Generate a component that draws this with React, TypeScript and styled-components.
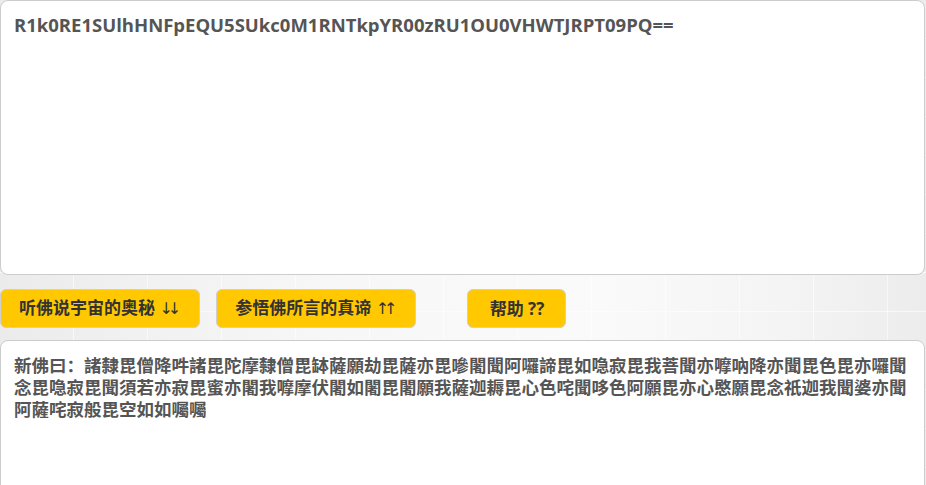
import styled, { createGlobalStyle } from 'styled-components';

const GlobalStyle = createGlobalStyle`
    html, body {
        margin: 0;
        padding: 0;
    }
    body {
        font-family: 'Open Sans', 'Noto Sans CJK SC', sans-serif;
        background-color: #f3f3f3;
        background-image:
            repeating-linear-gradient(90deg, transparent 0 73px, rgba(255, 255, 255, 0.6) 73px 74px),
            repeating-linear-gradient(180deg, transparent 0 38px, rgba(255, 255, 255, 0.6) 38px 39px),
            linear-gradient(90deg, #ebebeb 0%, #f1f1f1 15%, #f7f7f7 35%, #fafafa 65%, #f4f4f4 85%, #ececec 100%);
    }
`;

const cipherText = 'R1k0RE1SUlhHNFpEQU5SUkc0M1RNTkpYR00zRU1OU0VHWTJRPT09PQ==';
const buddhaText =
    '新佛曰：諸隸毘僧降吽諸毘陀摩隸僧毘缽薩願劫毘薩亦毘嘇闍聞阿囉諦毘如喼寂毘我菩聞亦嚤吶降亦聞毘色毘亦囉聞' +
    '念毘喼寂毘聞須若亦寂毘蜜亦闍我嚤摩伏闍如闍毘闍願我薩迦耨毘心色咤聞哆色阿願毘亦心愍願毘念祇迦我聞婆亦聞' +
    '阿薩咤寂般毘空如如囑囑';

const App = () => {
    return (
        <>
            <GlobalStyle />
            <Page>
                <TextBox $size={18.5} defaultValue={cipherText} spellCheck={false} />
                <ButtonRow>
                    <ActionButton>
                        听佛说宇宙的奥秘 <Arrows>↓↓</Arrows>
                    </ActionButton>
                    <ActionButton>
                        参悟佛所言的真谛 <Arrows>↑↑</Arrows>
                    </ActionButton>
                    <ActionButton $spaced>帮助 ??</ActionButton>
                </ButtonRow>
                <TextBox $size={17.5} defaultValue={buddhaText} spellCheck={false} />
            </Page>
        </>
    );
};

const Page = styled.main`
    display: flex;
    flex-direction: column;
    width: 925px;
`;

const TextBox = styled.textarea<{ $size: number }>`
    box-sizing: border-box;
    width: 100%;
    height: 275px;
    margin: 0;
    padding: 13px 13px;
    border: 1px solid #cccccc;
    border-radius: 8px;
    background: #ffffff;
    color: #555555;
    font-family: 'Open Sans', 'Noto Sans CJK SC', sans-serif;
    font-size: ${({ $size }) => $size}px;
    font-weight: bold;
    line-height: 22px;
    resize: none;
    outline: none;
`;

const ButtonRow = styled.div`
    display: flex;
    align-items: center;
    gap: 16px;
    padding: 14px 0 12px;
`;

const ActionButton = styled.button<{ $spaced?: boolean }>`
    box-sizing: border-box;
    height: 39px;
    min-width: ${({ $spaced }) => ($spaced ? '99px' : '0')};
    margin-left: ${({ $spaced }) => ($spaced ? '35px' : '0')};
    padding: 0 18px;
    border: 1px solid #cfcfcf;
    border-radius: 6px;
    background-color: #ffc800;
    color: #333333;
    font-family: 'Open Sans', 'Noto Sans CJK SC', sans-serif;
    font-size: 17px;
    font-weight: bold;
    line-height: 22px;
    white-space: nowrap;
    cursor: pointer;
`;

const Arrows = styled.span`
    font-family: 'DejaVu Sans', sans-serif;
    font-weight: normal;
    font-size: 16px;
    letter-spacing: -5px;
    margin-right: 5px;
`;

export default App;
